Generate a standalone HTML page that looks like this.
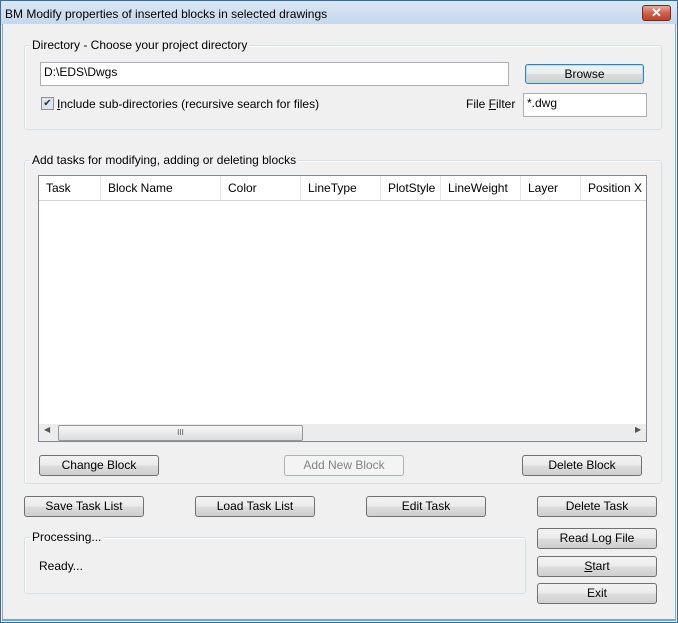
<!DOCTYPE html><html><head><style>
body{margin:0;width:678px;height:623px;overflow:hidden;background:#f0f0f0;font-family:"Liberation Sans",sans-serif;font-size:12px;color:#000}
.a{position:absolute}
.win{left:0;top:0;width:676px;height:621px;border:1px solid #3c6b96;background:linear-gradient(#dbe7f4,#c4d7ec 24px,#f0f0f0 24px)}
.cl{left:2px;top:24px;width:672px;height:595px;background:#f0f0f0;border-left:1px solid #8ab;border-right:1px solid #8ab;border-bottom:2px solid #5ab0e0}
.gb{border:1px solid #d5dfe5;border-radius:3px;box-shadow:inset 1px 1px 0 #fff}
.lg{background:#f0f0f0;padding:0 2px;top:-8px;left:6px}
.tb{background:#fff;border:1px solid #abadb3;border-top-color:#abadb3}
.bt{border:1px solid #707070;border-radius:3px;background:linear-gradient(#f2f2f2,#ebebeb 50%,#dddddd 50%,#cfcfcf);text-align:center;line-height:18px;box-sizing:border-box;height:21px;width:120px}
.dis{border-color:#adb2b5;color:#838383;background:#f4f4f4}
.hd{top:0;height:24px;line-height:24px;border-right:1px solid #e5e5e5;padding-left:7px;box-sizing:border-box}
</style></head><body>
<div class="a win"></div>
<div class="a" style="left:5px;top:7px;font-size:12px">BM&nbsp;Modify properties of inserted blocks in selected drawings</div>
<div class="a" style="left:642px;top:5px;width:29px;height:16px;border:1px solid #6b2d2a;border-radius:3px;background:linear-gradient(#e9a99a,#d1604a 50%,#c0402c);box-sizing:border-box;color:#fff;font-weight:bold;text-align:center;line-height:14px;font-size:13px">✕</div>
<div class="a cl"></div>

<div class="a gb" style="left:24px;top:45px;width:636px;height:83px"></div>
<div class="a lg" style="left:30px;top:38px">Directory - Choose your project directory</div>
<div class="a tb" style="left:40px;top:62px;width:467px;height:22px"></div>
<div class="a" style="left:44px;top:65px">D:\EDS\Dwgs</div>
<div class="a bt" style="left:525px;top:64px;width:119px;height:20px;border-color:#3c7fb1;box-shadow:inset 0 0 0 1px #a8e0f8">Browse</div>
<div class="a" style="left:41px;top:97px;width:11px;height:11px;border:1px solid #8e8f8f;background:#dde6ef;font-size:10px;line-height:11px;text-align:center;color:#333">✔</div>
<div class="a" style="left:57px;top:97px"><u>I</u>nclude sub-directories (recursive search for files)</div>
<div class="a" style="left:466px;top:97px">File <u>F</u>ilter</div>
<div class="a tb" style="left:523px;top:93px;width:122px;height:22px"></div>
<div class="a" style="left:527px;top:96px">*.dwg</div>

<div class="a gb" style="left:24px;top:160px;width:636px;height:322px"></div>
<div class="a lg" style="left:30px;top:153px">Add tasks for modifying, adding or deleting blocks</div>
<div class="a" style="left:38px;top:175px;width:607px;height:265px;border:1px solid #828790;background:#fff;overflow:hidden">
<div class="a" style="left:0;top:0;width:607px;height:24px;border-bottom:1px solid #d5d5d5;background:#fff"></div>
<div class="a hd" style="left:0;width:62px">Task</div>
<div class="a hd" style="left:62px;width:120px">Block Name</div>
<div class="a hd" style="left:182px;width:80px">Color</div>
<div class="a hd" style="left:262px;width:80px">LineType</div>
<div class="a hd" style="left:342px;width:60px">PlotStyle</div>
<div class="a hd" style="left:402px;width:80px">LineWeight</div>
<div class="a hd" style="left:482px;width:60px">Layer</div>
<div class="a hd" style="left:542px;width:80px">Position X</div>
<div class="a" style="left:0;top:248px;width:607px;height:17px;background:#ececec"></div>
<div class="a" style="left:5px;top:249px;font-size:8px;color:#555">◀</div>
<div class="a" style="left:596px;top:249px;font-size:8px;color:#555">▶</div>
<div class="a" style="left:19px;top:249px;width:243px;height:14px;border:1px solid #969696;border-radius:2px;background:linear-gradient(#f6f6f6,#dcdcdc);font-size:8px;text-align:center;line-height:14px;color:#555">III</div>
</div>
<div class="a bt" style="left:39px;top:455px">Change Block</div>
<div class="a bt dis" style="left:284px;top:455px">Add New Block</div>
<div class="a bt" style="left:522px;top:455px">Delete Block</div>

<div class="a bt" style="left:24px;top:496px">Save Task List</div>
<div class="a bt" style="left:195px;top:496px">Load Task List</div>
<div class="a bt" style="left:366px;top:496px">Edit Task</div>
<div class="a bt" style="left:537px;top:496px">Delete Task</div>

<div class="a gb" style="left:24px;top:537px;width:500px;height:55px"></div>
<div class="a lg" style="left:30px;top:530px">Processing...</div>
<div class="a" style="left:39px;top:559px">Ready...</div>
<div class="a bt" style="left:537px;top:528px">Read Log File</div>
<div class="a bt" style="left:537px;top:556px"><u>S</u>tart</div>
<div class="a bt" style="left:537px;top:583px">Exit</div>
</body></html>
